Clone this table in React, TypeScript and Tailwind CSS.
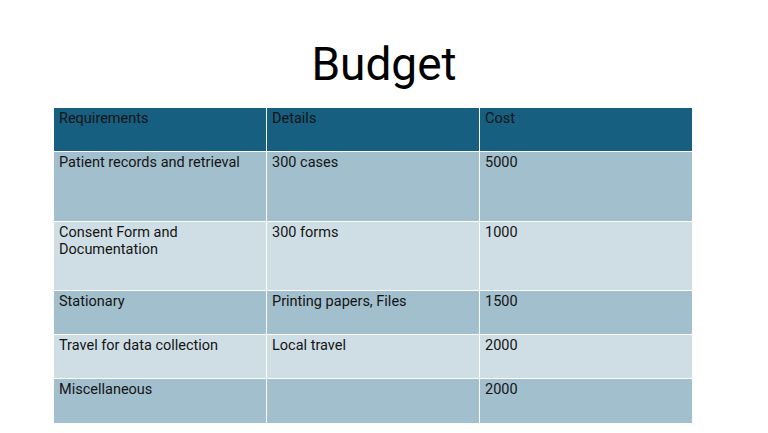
const rows = [
  { req: "Patient records and retrieval", details: "300 cases", cost: "5000", h: "h-[69px]", bg: "bg-[#a2bfcd]" },
  { req: "Consent Form and Documentation", details: "300 forms", cost: "1000", h: "h-[68px]", bg: "bg-[#cfdee5]" },
  { req: "Stationary", details: "Printing papers, Files", cost: "1500", h: "h-[43px]", bg: "bg-[#a2bfcd]" },
  { req: "Travel for data collection", details: "Local travel", cost: "2000", h: "h-[43px]", bg: "bg-[#cfdee5]" },
  { req: "Miscellaneous", details: "", cost: "2000", h: "h-[44px]", bg: "bg-[#a2bfcd]" },
];

function Cell({ children, className }: { children?: React.ReactNode; className: string }) {
  return <div className={`pl-[5px] pt-[2px] pr-2 text-[14.5px] leading-[17px] text-[#141414] ${className}`}>{children}</div>;
}

export default function App() {
  return (
    <div className="w-[768px] h-[433px] bg-white overflow-hidden" style={{ fontFamily: "Roboto, 'Noto Sans', sans-serif" }}>
      <h1 className="pt-[38px] text-center text-[46px] leading-[52px] text-black">Budget</h1>
      <div className="ml-[54px] mt-[18px] grid w-[638px] grid-cols-[212px_212px_212px] gap-px bg-white">
        <Cell className="h-[43px] bg-[#175f80] text-[#0d1e26]">Requirements</Cell>
        <Cell className="h-[43px] bg-[#175f80] text-[#0d1e26]">Details</Cell>
        <Cell className="h-[43px] bg-[#175f80] text-[#0d1e26]">Cost</Cell>
        {rows.map((r) => (
          <>
            <Cell key={r.req + "a"} className={`${r.h} ${r.bg}`}>{r.req}</Cell>
            <Cell key={r.req + "b"} className={`${r.h} ${r.bg}`}>{r.details}</Cell>
            <Cell key={r.req + "c"} className={`${r.h} ${r.bg}`}>{r.cost}</Cell>
          </>
        ))}
      </div>
    </div>
  );
}
